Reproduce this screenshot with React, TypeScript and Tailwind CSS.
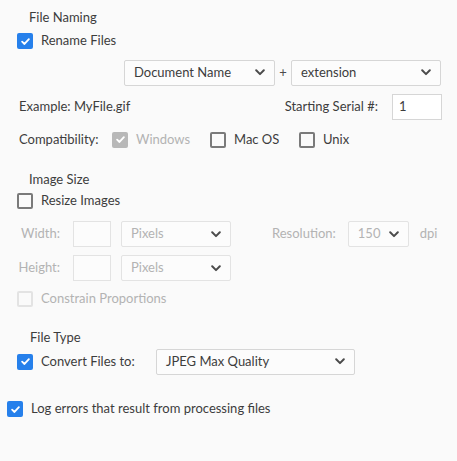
import React from "react";

const FONT = { fontFamily: 'Lato, "Open Sans", sans-serif' };

function Chevron({ className = "" }: { className?: string }) {
  return (
    <svg viewBox="0 0 10 7" className={`h-[7px] w-[10px] ${className}`} aria-hidden="true">
      <path d="M1.2 1.3 5 5.1 8.8 1.3" fill="none" stroke="currentColor" strokeWidth="2" strokeLinecap="round" strokeLinejoin="round" />
    </svg>
  );
}

function Checkbox({ checked, disabled }: { checked?: boolean; disabled?: boolean }) {
  if (checked) {
    return (
      <span
        className={`flex h-[16px] w-[16px] shrink-0 items-center justify-center rounded-[2px] ${
          disabled ? "bg-[#b8b8b8]" : "bg-[#2680eb]"
        }`}
      >
        <svg viewBox="0 0 12 12" className="h-[11px] w-[11px]" aria-hidden="true">
          <path d="M2.3 6.2 4.9 8.7 9.7 3.4" fill="none" stroke="#fff" strokeWidth="2" strokeLinecap="round" strokeLinejoin="round" />
        </svg>
      </span>
    );
  }
  return (
    <span
      className={`block h-[16px] w-[16px] shrink-0 rounded-[2px] border-2 ${
        disabled ? "border-[#e3e3e3]" : "border-[#7a7a7a]"
      } bg-[#fafafa]`}
    />
  );
}

function Select({
  value,
  width,
  disabled,
}: {
  value: string;
  width: string;
  disabled?: boolean;
}) {
  return (
    <div
      className={`flex h-[26px] items-center justify-between rounded-[2px] border bg-[#fcfcfc] pl-[9px] pr-[9px] ${width} ${
        disabled ? "border-[#e3e3e3] text-[#b3b3b3]" : "border-[#d6d6d6] text-[#3d3d3d]"
      }`}
    >
      <span>{value}</span>
      <Chevron className="text-[#4b4b4b]" />
    </div>
  );
}

export default function App() {
  return (
    <div className="h-[461px] w-[457px] bg-[#fafafa] text-[13px] text-[#3d3d3d]" style={FONT}>
      <div className="flex flex-col pt-[9px]">
        <div className="flex h-[18px] items-center pl-[29px]">File Naming</div>

        <div className="flex h-[28px] items-center gap-[8px] pl-[17px]">
          <Checkbox checked />
          <span>Rename Files</span>
        </div>

        <div className="flex h-[35px] items-center pl-[124px]">
          <Select value="Document Name" width="w-[151px]" />
          <span className="w-[16px] text-center text-[#4b4b4b]">+</span>
          <Select value="extension" width="w-[150px]" />
        </div>

        <div className="flex h-[34px] items-center pl-[19px]">
          <span>Example: MyFile.gif</span>
          <span className="ml-auto mr-[14px]">Starting Serial #:</span>
          <div className="mr-[15px] flex h-[26px] w-[50px] items-center border border-[#d6d6d6] bg-white pl-[6px]">
            1
          </div>
        </div>

        <div className="flex h-[31px] items-center pl-[19px]">
          <span className="w-[93px]">Compatibility:</span>
          <div className="flex w-[98px] items-center gap-[8px]">
            <Checkbox checked disabled />
            <span className="text-[#b3b3b3]">Windows</span>
          </div>
          <div className="flex w-[89px] items-center gap-[8px]">
            <Checkbox />
            <span>Mac OS</span>
          </div>
          <div className="flex items-center gap-[8px]">
            <Checkbox />
            <span>Unix</span>
          </div>
        </div>

        <div className="mt-[15px] flex h-[20px] items-center pl-[29px]">Image Size</div>

        <div className="flex h-[22px] items-center gap-[8px] pl-[17px]">
          <Checkbox />
          <span>Resize Images</span>
        </div>

        <div className="mt-[5px] flex h-[34px] items-center text-[#b3b3b3]">
          <span className="w-[60px] text-right">Width:</span>
          <div className="ml-[13px] h-[26px] w-[38px] border border-[#e3e3e3] bg-[#fcfcfc]" />
          <div className="ml-[10px]">
            <Select value="Pixels" width="w-[110px]" disabled />
          </div>
          <span className="ml-[41px]">Resolution:</span>
          <div className="ml-[12px]">
            <Select value="150" width="w-[61px]" disabled />
          </div>
          <span className="ml-[11px]">dpi</span>
        </div>

        <div className="flex h-[34px] items-center text-[#b3b3b3]">
          <span className="w-[60px] text-right">Height:</span>
          <div className="ml-[13px] h-[26px] w-[38px] border border-[#e3e3e3] bg-[#fcfcfc]" />
          <div className="ml-[10px]">
            <Select value="Pixels" width="w-[110px]" disabled />
          </div>
        </div>

        <div className="mt-[4px] flex h-[20px] items-center gap-[8px] pl-[17px]">
          <Checkbox disabled />
          <span className="text-[#b3b3b3]">Constrain Proportions</span>
        </div>

        <div className="mt-[19px] flex h-[20px] items-center pl-[30px]">File Type</div>

        <div className="flex h-[27px] items-center pl-[17px]">
          <Checkbox checked />
          <span className="ml-[8px] w-[115px]">Convert Files to:</span>
          <Select value="JPEG Max Quality" width="w-[199px]" />
        </div>

        <div className="mt-[24px] flex h-[20px] items-center gap-[8px] pl-[7px]">
          <Checkbox checked />
          <span>Log errors that result from processing files</span>
        </div>
      </div>
    </div>
  );
}
